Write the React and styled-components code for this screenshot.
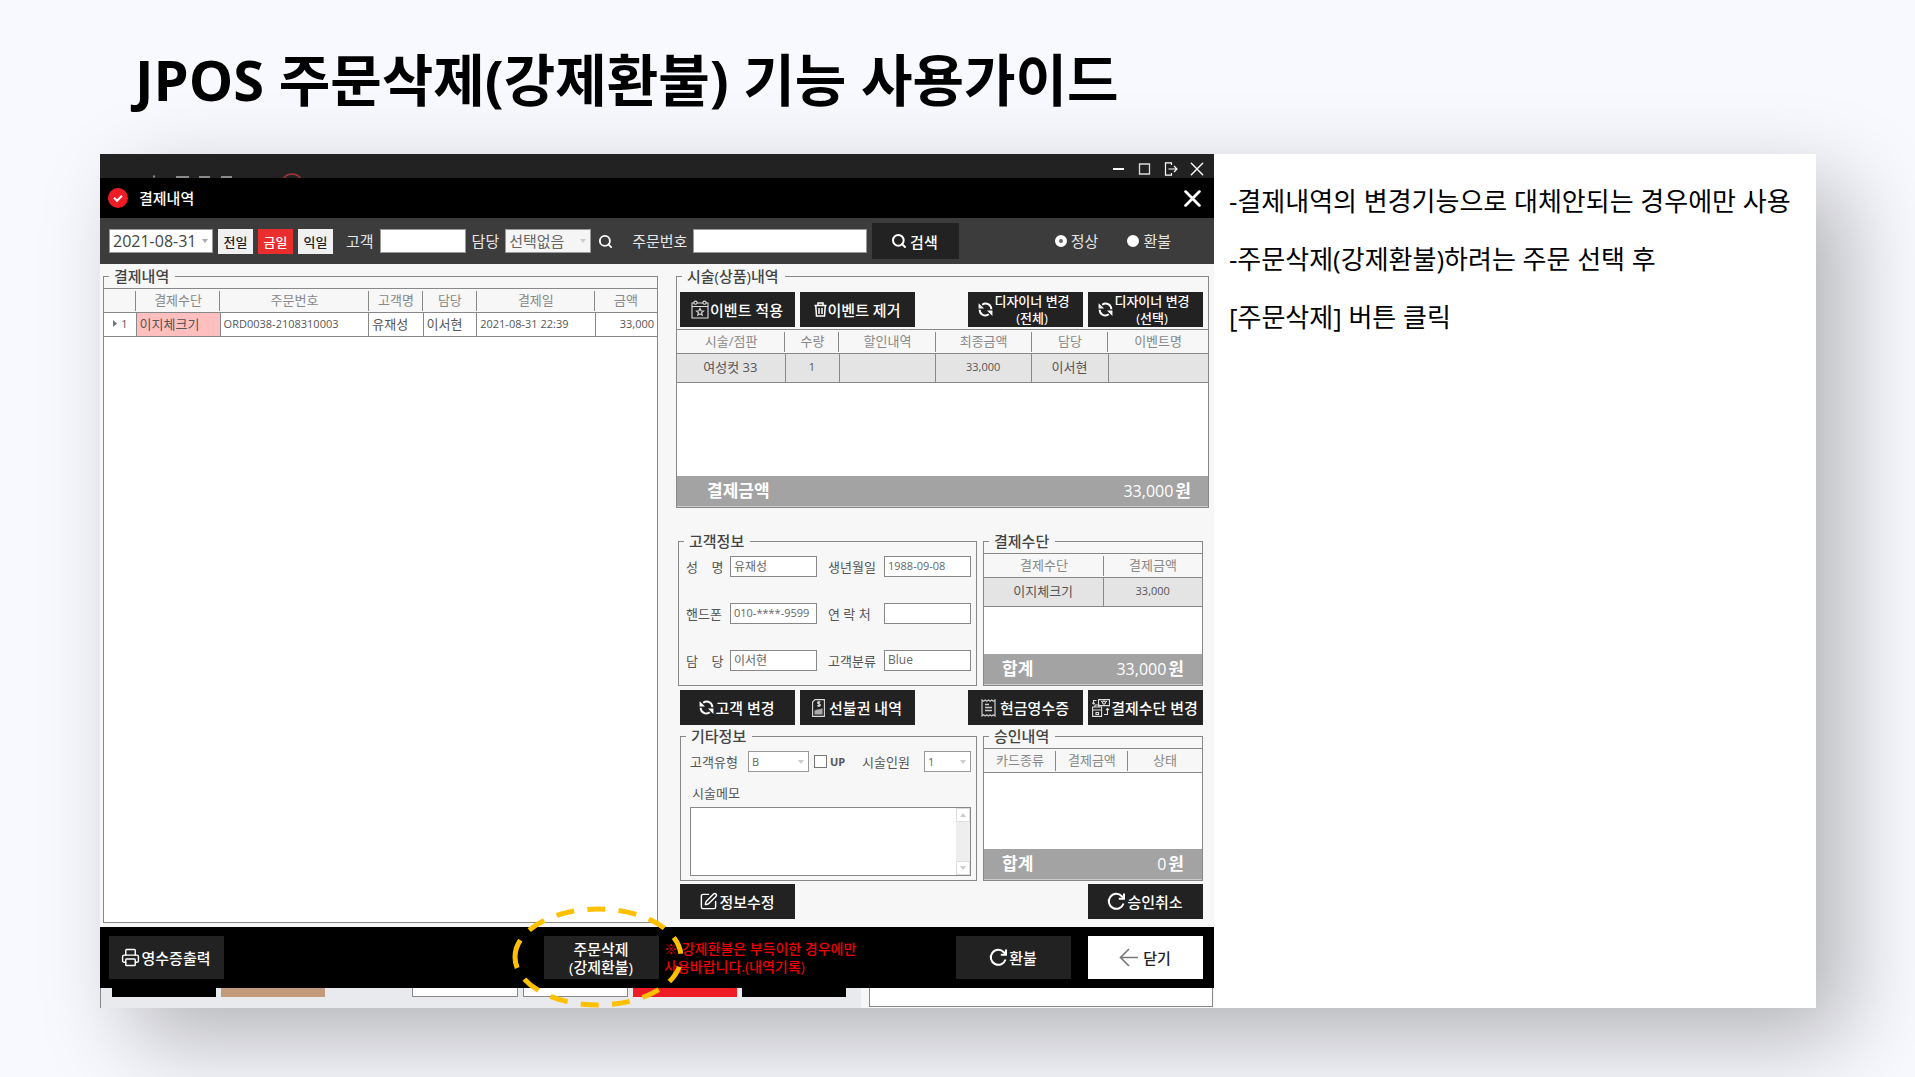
import React from "react";
import styled, { createGlobalStyle, css } from "styled-components";
import { Printer, Search, SquarePen } from "lucide-react";

const GlobalStyle = createGlobalStyle`
  * {
    box-sizing: border-box;
  }
  body {
    margin: 0;
    background: #f8f9fe;
    color: #000;
    font-family: "Open Sans", "Noto Sans CJK KR", sans-serif;
  }
  button, input, select, textarea {
    font-family: inherit;
    margin: 0;
  }
`;

const Page = styled.div`
  min-height: 100vh;
  padding: 37px 99px 69px 100px;
  overflow: hidden;
`;
const Title = styled.h1`
  margin: 0 0 33px;
  padding-left: 35px;
  font-size: 56px;
  font-weight: 700;
  line-height: 84px;
`;
const Card = styled.div`
  display: grid;
  grid-template-columns: 1114fr 602fr;
  background: #fff;
  box-shadow: 31px 31px 82px rgba(0, 0, 0, 0.28);
`;
const Notes = styled.div`
  padding: 18px 12px 18px 15px;
  font-size: 26px;
  line-height: 58px;
  p {
    margin: 0;
  }
`;

/* ---------- program window ---------- */
const Window = styled.div`
  display: flex;
  flex-direction: column;
  min-width: 0;
  background: #f7f7f7;
`;
const TopBar = styled.div`
  display: flex;
  justify-content: space-between;
  height: 24px;
  padding: 0 10px 0 52px;
  background: #222;
`;
const WindowIcons = styled.div`
  display: flex;
  align-items: center;
  gap: 12px;
  padding-top: 6px;
`;
const IconButton = styled.button`
  display: flex;
  padding: 0;
  border: none;
  background: none;
  color: #fff;
  cursor: pointer;
`;
const TitleBar = styled.div`
  display: flex;
  align-items: center;
  height: 40px;
  padding: 0 13px 0 8px;
  background: #000;
  color: #fff;
  h2 {
    flex: 1;
    margin: 0 0 0 11px;
    font-size: 15px;
    font-weight: 500;
    line-height: 20px;
  }
`;
const ToolBar = styled.div`
  display: flex;
  align-items: center;
  height: 46px;
  padding: 0 43px 0 9px;
  background: #3c3c3c;
  color: #e6e6e6;
  font-size: 15px;
  line-height: 20px;
  label {
    white-space: nowrap;
  }
`;
const Days = styled.div`
  display: flex;
  gap: 5px;
  margin: 0 13px 0 5px;
`;
const DayButton = styled.button`
  width: 35px;
  height: 25px;
  padding: 0;
  border: 1px solid ${(p) => (p.$on ? "#ea2d2d" : "#f0f0f0")};
  background: ${(p) => (p.$on ? "#ea2d2d" : "#f0f0f0")};
  color: ${(p) => (p.$on ? "#fff" : "#222")};
  font-size: 13px;
  font-weight: 500;
  cursor: pointer;
`;
const Labelled = styled.label`
  display: flex;
  align-items: center;
  gap: 6px;
  margin-right: ${(p) => p.$after || 0}px;
  margin-left: ${(p) => p.$before || 0}px;
`;
const ToolInput = styled.input`
  width: ${(p) => p.$w}px;
  height: 24px;
  padding: 0 4px;
  border: 1px solid #999;
  background: #fff;
`;
const SearchButton = styled.button`
  display: flex;
  align-items: center;
  justify-content: center;
  gap: 3px;
  width: 87px;
  height: 36px;
  margin-left: 5px;
  padding: 0 3px 0 0;
  border: none;
  background: #222;
  color: #fff;
  font-size: 15px;
  font-weight: 500;
  cursor: pointer;
`;
const Radios = styled.div`
  display: flex;
  gap: 29px;
  margin-left: auto;
  label {
    display: flex;
    align-items: center;
    gap: 4px;
  }
  input {
    appearance: none;
    width: 12px;
    height: 12px;
    border: 4px solid #fff;
    border-radius: 50%;
    background: #fff;
  }
  input:checked {
    background: #666;
  }
`;

/* box with a tiny arrow, used by the date field and the drop-downs */
const Combo = styled.span`
  display: flex;
  align-items: center;
  width: ${(p) => p.$w}px;
  height: ${(p) => p.$h || 21}px;
  padding-right: 4px;
  border: 1px solid #999;
  background: ${(p) => p.$bg || "#fff"};
  select,
  input {
    appearance: none;
    flex: 1;
    min-width: 0;
    height: 100%;
    padding: 0 0 0 3px;
    border: none;
    background: none;
    color: ${(p) => p.$color || "#666"};
    font-size: ${(p) => p.$size || 11}px;
  }
`;

const Body = styled.div`
  display: grid;
  grid-template-columns: 555fr 533fr;
  gap: 18px;
  padding: 4px 5px 4px 3px;
`;
const Group = styled.fieldset`
  display: flex;
  flex-direction: column;
  min-width: 0;
  margin: 0 0 0 ${(p) => p.$left || 0}px;
  padding: ${(p) => p.$pad || "4px 0 0"};
  border: 1px solid #888;
  legend {
    margin-left: 5px;
    padding: 0 6px 0 5px;
    color: #444;
    font-size: 15px;
    font-weight: 500;
    line-height: 16px;
  }
`;
const Sheet = styled.div`
  display: flex;
  flex: 1;
  flex-direction: column;
  min-height: ${(p) => p.$min || 0}px;
  background: #fff;
`;
const Table = styled.table`
  width: 100%;
  table-layout: fixed;
  border-collapse: collapse;
  border-top: 1px solid #888;
  color: #555;
  font-size: 13px;
  line-height: 18px;
  th {
    height: 24px;
    padding: 0 0 2px;
    border-bottom: 1px solid #888;
    background: #f7f7f7 linear-gradient(#888, #888) right center / 1px 20px
      no-repeat;
    color: #888;
    font-weight: 400;
  }
  th:last-child {
    background-image: none;
  }
  td {
    height: ${(p) => (p.$shaded ? 29 : 24)}px;
    padding: 0 4px 2px 3px;
    border-right: 1px solid #888;
    border-bottom: 1px solid #888;
    background: ${(p) => (p.$shaded ? "#e4e4e4" : "#fff")};
    text-align: ${(p) => (p.$shaded ? "center" : "left")};
    white-space: nowrap;
  }
  td:last-child {
    border-right: none;
  }
`;
const Cell = styled.td`
  font-size: ${(p) => (p.$num ? 11 : 13)}px;
  ${(p) =>
    p.$right &&
    css`
      && {
        text-align: right;
        padding-right: 3px;
      }
    `}
  ${(p) =>
    p.$pink &&
    css`
      && {
        background: #ffbfbf;
      }
    `}
`;
const RowMark = styled.div`
  display: flex;
  align-items: center;
  justify-content: space-between;
  padding: 0 4px 0 6px;
`;
const Total = styled.div`
  display: flex;
  align-items: center;
  justify-content: space-between;
  height: 31px;
  margin-top: auto;
  padding: ${(p) => (p.$wide ? "0 17px 0 30px" : "0 18px")};
  border-bottom: 1px solid #ccc;
  background: #a3a3a3;
  color: #fff;
  font-size: 17px;
  line-height: 24px;
  span {
    margin-right: 2px;
    font-size: 16px;
  }
`;
const Right = styled.div`
  display: flex;
  flex-direction: column;
  min-width: 0;
  padding-bottom: 4px;
`;
const Pair = styled.div`
  display: grid;
  grid-template-columns: 299fr 220fr;
  gap: 6px;
  min-height: 153px;
  margin: ${(p) => p.$top}px 6px 0 2px;
`;
const Actions = styled.div`
  display: flex;
  gap: 5px;
  padding: ${(p) => p.$pad || "0 6px 0 4px"};
  margin-top: ${(p) => p.$top || 0}px;
  .push {
    margin-left: auto;
  }
`;
const Button = styled.button`
  display: flex;
  align-items: center;
  justify-content: center;
  gap: ${(p) => (p.$loose ? 4 : 1)}px;
  width: 115px;
  height: ${(p) => (p.$tall ? 43 : 35)}px;
  padding: 0 ${(p) => (p.$small ? 3 : 1)}px 0 0;
  border: none;
  background: ${(p) => (p.$white ? "#fff" : "#222")};
  color: ${(p) => (p.$white ? "#222" : "#fff")};
  font-size: ${(p) => (p.$small ? 13 : 15)}px;
  font-weight: 500;
  line-height: ${(p) => (p.$small ? 17 : 18)}px;
  white-space: nowrap;
  cursor: pointer;
  svg {
    flex: none;
  }
`;

const Customer = styled.div`
  display: grid;
  grid-template-columns: 131fr 143fr;
  row-gap: 26px;
  column-gap: 11px;
  padding: 3px 5px 0 7px;
  label {
    display: flex;
    align-items: center;
    justify-content: space-between;
    color: #555;
    font-size: 13px;
    line-height: 18px;
    white-space: pre;
  }
  input {
    width: 87px;
    height: 21px;
    padding: 0 0 2px 3px;
    border: 1px solid #888;
    background: #fff;
    color: #666;
    font-size: 12px;
  }
  input.num {
    font-size: 11px;
  }
`;
const Extra = styled.div`
  display: flex;
  flex-direction: column;
  padding: 3px 5px 4px 9px;
`;
const ExtraRow = styled.div`
  display: grid;
  grid-template-columns: 58px 66px 48px 1fr 47px;
  align-items: center;
  color: #555;
  font-size: 13px;
  line-height: 18px;
  label {
    display: flex;
    align-items: center;
    gap: 3px;
    white-space: nowrap;
  }
  b {
    font-size: 11px;
  }
`;
const Check = styled.input`
  appearance: none;
  width: 13px;
  height: 13px;
  border: 1px solid #777;
  background: #fff;
`;
const MemoLabel = styled.label`
  padding: 12px 0 5px 2px;
  color: #555;
  font-size: 13px;
  line-height: 18px;
`;
const MemoBox = styled.div`
  display: flex;
  height: 69px;
  border: 1px solid #888;
  background: #fff;
  textarea {
    flex: 1;
    min-width: 0;
    padding: 3px;
    border: none;
    background: none;
    resize: none;
  }
`;
const Scroll = styled.div`
  display: flex;
  flex-direction: column;
  justify-content: space-between;
  width: 14px;
  background: #eee;
  span {
    display: flex;
    align-items: center;
    justify-content: center;
    height: 14px;
    border: 1px solid #ddd;
    background: #fff;
  }
`;

const Footer = styled.div`
  display: flex;
  align-items: center;
  height: 61px;
  padding: 0 11px 0 9px;
  background: #000;
`;
const DeleteSpot = styled.div`
  position: relative;
  margin-left: auto;
`;
/* dashed marker round the delete button */
const Ring = styled.svg`
  position: absolute;
  left: -34px;
  top: -32px;
  pointer-events: none;
`;
const Warning = styled.p`
  width: 297px;
  margin: 0;
  padding-left: 5px;
  color: #f00000;
  font-size: 14px;
  font-weight: 500;
  line-height: 18px;
  white-space: nowrap;
`;
const FooterEnd = styled.div`
  display: flex;
  gap: 17px;
`;
const Behind = styled.div`
  display: grid;
  grid-template-columns: 760fr 353fr;
  height: 20px;
  border-left: 1px solid #888;
  background: #e9eaee;
`;
const Stubs = styled.div`
  display: flex;
  gap: 5px;
  padding: 0 15px 0 11px;
`;
const Stub = styled.div`
  flex: ${(p) => p.$grow || 105};
  height: 9px;
  background: ${(p) => p.$bg};
  border: ${(p) => (p.$line ? "1px solid #888" : "none")};
  border-top: none;
`;
const BehindPanel = styled.div`
  padding: 0 1px 1px 8px;
  background: #f7f7f7;
  div {
    height: 19px;
    border: 1px solid #888;
    border-top: none;
    background: #fff;
  }
`;

/* ---------- icons ---------- */
const Caret = ({ up, color = "#aaa" }) => (
  <svg width="6" height="4" viewBox="0 0 6 4">
    <path d={up ? "M0 4h6L3 0z" : "M0 0h6L3 4z"} fill={color} />
  </svg>
);
const LogoEdge = () => (
  <svg width="150" height="24" viewBox="0 0 150 24" fill="none">
    <path d="M1 22.5h2M24 23h13M47 23h11M69 23h11" stroke="#8a8a8a" strokeWidth="2" />
    <circle cx="140" cy="31" r="11" stroke="#a8323a" strokeWidth="1.5" />
  </svg>
);
const CheckBadge = () => (
  <svg width="20" height="20" viewBox="0 0 20 20" fill="none">
    <circle cx="10" cy="10" r="10" fill="#ee1c25" />
    <path d="M6 9.8l3 3 5-5" stroke="#fff" strokeWidth="2" />
  </svg>
);
const CloseIcon = ({ size, w }) => (
  <svg width={size} height={size} viewBox="0 0 16 16" fill="none">
    <path d="M1.5 1.5l13 13M14.5 1.5l-13 13" stroke="#fff" strokeWidth={w} strokeLinecap="round" />
  </svg>
);
const MinIcon = () => (
  <svg width="14" height="14" viewBox="0 0 14 14">
    <path d="M1 6h11v2H1z" fill="#fff" />
  </svg>
);
const MaxIcon = () => (
  <svg width="14" height="14" viewBox="0 0 14 14" fill="none">
    <path d="M1.5 2h10v10h-10z" stroke="#ddd" strokeWidth="1.3" />
  </svg>
);
const ExitIcon = () => (
  <svg width="14" height="14" viewBox="0 0 14 14" fill="none" stroke="#fff" strokeWidth="1.2">
    <path d="M7.5 3V.8h-6v12.4h6V11M4.5 7H13M10 4l3 3-3 3" />
  </svg>
);
const SyncIcon = () => (
  <svg width="15" height="15" viewBox="0 0 16 16" fill="none" stroke="#fff" strokeWidth="2.1">
    <path d="M4.5 2.9A6 6 0 0 1 14.2 7.8M11.5 13.1A6 6 0 0 1 1.8 8.2" />
    <path d="M.6 1.2v5.800h5.800zM15.4 14.8V9H9.6z" fill="#fff" stroke="none" />
  </svg>
);
const RedoIcon = () => (
  <svg width="19" height="19" viewBox="0 0 19 19" fill="none" stroke="#fff" strokeWidth="2">
    <path d="M16.5 11.5A7.5 7.5 0 1 1 14.8 4.2l1.700 1.800" />
    <path d="M17 1.5v5.2h-5.2" />
  </svg>
);
const BackIcon = () => (
  <svg width="20" height="19" viewBox="0 0 20 19" fill="none" stroke="#777" strokeWidth="1.6">
    <path d="M19 9.5H1.5M10 1L1.5 9.5 10 18" />
  </svg>
);
const CalendarStarIcon = () => (
  <svg width="18" height="19" viewBox="0 0 18 19" fill="none" stroke="#ddd" strokeWidth="1.1">
    <path d="M3 3H1v15h16V3h-2M6 3h6M1 6.5h16" />
    <circle cx="4.500" cy="2.700" r="1.600" />
    <circle cx="13.500" cy="2.700" r="1.600" />
    <path d="M9 8.500l1 2.300 2.500.3-1.900 1.600.6 2.500L9 13.900l-2.200 1.300.6-2.500-1.900-1.600 2.500-.3z" />
  </svg>
);
const TrashIcon = () => (
  <svg width="13" height="15" viewBox="0 0 13 15" fill="none" stroke="#fff" strokeWidth="1.5">
    <path d="M.5 3.5h12M4 3V1h5v2M1.8 4l.7 10h8l.7-10M5 6v6M8 6v6" />
  </svg>
);
const PrepaidIcon = () => (
  <svg width="13" height="18" viewBox="0 0 13 18" fill="none" stroke="#ddd" strokeWidth="1.1">
    <path d="M3 .6h9.4v16.8H.6V3z" />
    <path d="M8.3 3.3c-.6-.8-2.8-.7-2.8.5s2.9.8 2.9 2.1-2.4 1.5-3.1.5M6.9 2v6" />
    <path d="M3 15v-3l2-1h2l3-1v5z" fill="#aaa" stroke="#aaa" />
  </svg>
);
const ReceiptIcon = () => (
  <svg width="15" height="18" viewBox="0 0 15 18" fill="none" stroke="#ccc" strokeWidth="1.2">
    <path d="M1 1l1.6 1.2L4.3 1l1.6 1.2L7.5 1l1.6 1.2L10.7 1l1.6 1.2L14 1v16l-1.7-1.2-1.6 1.2-1.6-1.2L7.5 17l-1.6-1.2L4.3 17l-1.7-1.2L1 17z" />
    <path d="M4 5.5h4M4 8.5h7M4 11.5h7" strokeWidth="1.5" />
  </svg>
);
const PayChangeIcon = () => (
  <svg width="18" height="18" viewBox="0 0 18 18" fill="none" stroke="#ddd" strokeWidth="1.1">
    <path d="M6.5.6h11v6h-11zM9 2.5h1M14 2.5h1" />
    <circle cx="12" cy="3.6" r="1.5" />
    <path d="M.6 8h9v9.4h-9zM.6 11h9M3 8V6h4v2M4 13.5h2.5v2H4z" />
    <path d="M4.5 1.5h-3V5M.3 3.8L1.500 5l1.300-1.200M12 15.500h3.500v-6M14 11l1.500-1.500L17 11" />
  </svg>
);

function OrderTable() {
  return (
    <Table>
      <colgroup>
        <col style={{ width: "5.8%" }} />
        <col style={{ width: "15.2%" }} />
        <col style={{ width: "26.9%" }} />
        <col style={{ width: "9.8%" }} />
        <col style={{ width: "9.7%" }} />
        <col style={{ width: "21.4%" }} />
        <col />
      </colgroup>
      <thead>
        <tr>
          <th aria-label="번호"></th>
          <th>결제수단</th>
          <th>주문번호</th>
          <th>고객명</th>
          <th>담당</th>
          <th>결제일</th>
          <th>금액</th>
        </tr>
      </thead>
      <tbody>
        <tr>
          <Cell $num>
            <RowMark>
              <svg width="4" height="7" viewBox="0 0 4 7"><path d="M0 0l4 3.5L0 7z" fill="#777" /></svg>
              1
            </RowMark>
          </Cell>
          <Cell $pink>이지체크기</Cell>
          <Cell $num>ORD0038-2108310003</Cell>
          <Cell>유재성</Cell>
          <Cell>이서현</Cell>
          <Cell $num>2021-08-31 22:39</Cell>
          <Cell $num $right>33,000</Cell>
        </tr>
      </tbody>
    </Table>
  );
}

function ItemTable() {
  return (
    <Table $shaded>
      <colgroup>
        <col style={{ width: "20.4%" }} />
        <col style={{ width: "10.2%" }} />
        <col style={{ width: "18.1%" }} />
        <col style={{ width: "18.1%" }} />
        <col style={{ width: "14.4%" }} />
        <col />
      </colgroup>
      <thead>
        <tr>
          <th>시술/점판</th>
          <th>수량</th>
          <th>할인내역</th>
          <th>최종금액</th>
          <th>담당</th>
          <th>이벤트명</th>
        </tr>
      </thead>
      <tbody>
        <tr>
          <Cell>여성컷 33</Cell>
          <Cell $num>1</Cell>
          <Cell></Cell>
          <Cell $num>33,000</Cell>
          <Cell>이서현</Cell>
          <Cell></Cell>
        </tr>
      </tbody>
    </Table>
  );
}

function Header() {
  return (
    <>
      <TopBar>
        <LogoEdge />
        <WindowIcons>
          <IconButton aria-label="최소화"><MinIcon /></IconButton>
          <IconButton aria-label="최대화"><MaxIcon /></IconButton>
          <IconButton aria-label="나가기"><ExitIcon /></IconButton>
          <IconButton aria-label="종료"><CloseIcon size={14} w={1.6} /></IconButton>
        </WindowIcons>
      </TopBar>
      <TitleBar>
        <CheckBadge />
        <h2>결제내역</h2>
        <IconButton aria-label="창 닫기"><CloseIcon size={17} w={2.6} /></IconButton>
      </TitleBar>
      <ToolBar>
        <Combo $w={104} $h={24} $size={16} $color="#444">
          <input aria-label="날짜" defaultValue="2021-08-31" />
          <Caret />
        </Combo>
        <Days>
          <DayButton>전일</DayButton>
          <DayButton $on>금일</DayButton>
          <DayButton>익일</DayButton>
        </Days>
        <Labelled $after={6}>
          고객
          <ToolInput $w={86} />
        </Labelled>
        <Labelled $after={7}>
          담당
          <Combo $w={86} $h={24} $size={15} $bg="#f5f5f5">
            <select>
              <option>선택없음</option>
            </select>
            <Caret color="#ccc" />
          </Combo>
        </Labelled>
        <IconButton aria-label="담당 검색"><Search size={15} strokeWidth={3} /></IconButton>
        <Labelled $before={19}>
          주문번호
          <ToolInput $w={174} />
        </Labelled>
        <SearchButton>
          <Search size={16} strokeWidth={3} />
          검색
        </SearchButton>
        <Radios>
          <label>
            <input type="radio" name="state" defaultChecked />
            정상
          </label>
          <label>
            <input type="radio" name="state" />
            환불
          </label>
        </Radios>
      </ToolBar>
    </>
  );
}

function CustomerInfo() {
  return (
    <Group>
      <legend>고객정보</legend>
      <Customer>
        <label>성{"    "}명<input defaultValue="유재성" /></label>
        <label>생년월일<input className="num" defaultValue="1988-09-08" /></label>
        <label>핸드폰<input className="num" defaultValue="010-****-9599" /></label>
        <label>연 락 처<input /></label>
        <label>담{"    "}당<input defaultValue="이서현" /></label>
        <label>고객분류<input defaultValue="Blue" /></label>
      </Customer>
    </Group>
  );
}

function ExtraInfo() {
  return (
    <Group $left={2}>
      <legend>기타정보</legend>
      <Extra>
        <ExtraRow>
          <label htmlFor="kind">고객유형</label>
          <Combo $w={61}>
            <select id="kind">
              <option>B</option>
            </select>
            <Caret color="#ccc" />
          </Combo>
          <label>
            <Check type="checkbox" />
            <b>UP</b>
          </label>
          <label htmlFor="people">시술인원</label>
          <Combo $w={47}>
            <select id="people">
              <option>1</option>
            </select>
            <Caret color="#ccc" />
          </Combo>
        </ExtraRow>
        <MemoLabel htmlFor="memo">시술메모</MemoLabel>
        <MemoBox>
          <textarea id="memo" />
          <Scroll>
            <span><Caret up color="#ccc" /></span>
            <span><Caret color="#ccc" /></span>
          </Scroll>
        </MemoBox>
      </Extra>
    </Group>
  );
}

function Details() {
  return (
    <Right>
      <Group $pad="8px 0 0">
        <legend>시술(상품)내역</legend>
        <Actions $pad="0 5px 2px 3px">
          <Button><CalendarStarIcon />이벤트 적용</Button>
          <Button><TrashIcon />이벤트 제거</Button>
          <Button $small className="push"><SyncIcon /><span>디자이너 변경<br />(전체)</span></Button>
          <Button $small><SyncIcon /><span>디자이너 변경<br />(선택)</span></Button>
        </Actions>
        <Sheet $min={178}>
          <ItemTable />
          <Total $wide>
            <b>결제금액</b>
            <div><span>33,000</span><b>원</b></div>
          </Total>
        </Sheet>
      </Group>

      <Pair $top={25}>
        <CustomerInfo />
        <Group>
          <legend>결제수단</legend>
          <Sheet>
            <Table $shaded>
              <colgroup>
                <col style={{ width: "55%" }} />
                <col />
              </colgroup>
              <thead>
                <tr>
                  <th>결제수단</th>
                  <th>결제금액</th>
                </tr>
              </thead>
              <tbody>
                <tr>
                  <Cell>이지체크기</Cell>
                  <Cell $num>33,000</Cell>
                </tr>
              </tbody>
            </Table>
            <Total>
              <b>합계</b>
              <div><span>33,000</span><b>원</b></div>
            </Total>
          </Sheet>
        </Group>
      </Pair>
      <Actions $top={4}>
        <Button><SyncIcon />고객 변경</Button>
        <Button $loose><PrepaidIcon />선불권 내역</Button>
        <Button $loose className="push"><ReceiptIcon />현금영수증</Button>
        <Button><PayChangeIcon />결제수단 변경</Button>
      </Actions>

      <Pair $top={3}>
        <ExtraInfo />
        <Group>
          <legend>승인내역</legend>
          <Sheet>
            <Table>
              <colgroup>
                <col style={{ width: "33%" }} />
                <col style={{ width: "33%" }} />
                <col />
              </colgroup>
              <thead>
                <tr>
                  <th>카드종류</th>
                  <th>결제금액</th>
                  <th>상태</th>
                </tr>
              </thead>
            </Table>
            <Total>
              <b>합계</b>
              <div><span>0</span><b>원</b></div>
            </Total>
          </Sheet>
        </Group>
      </Pair>
      <Actions $top={3}>
        <Button><SquarePen size={19} strokeWidth={1.8} />정보수정</Button>
        <Button className="push"><RedoIcon />승인취소</Button>
      </Actions>
    </Right>
  );
}

function BottomBar() {
  return (
    <>
      <Footer>
        <Button $tall><Printer size={19} strokeWidth={1.8} />영수증출력</Button>
        <DeleteSpot>
          <Button $tall>주문삭제<br />(강제환불)</Button>
          <Ring width="176" height="106" viewBox="0 0 176 106" fill="none">
            <path
              d="M5 53A83 48 0 0 1 171 53A83 48 0 0 1 5 53"
              stroke="#ffc000"
              strokeWidth="5"
              strokeDasharray="18 13.3"
            />
          </Ring>
        </DeleteSpot>
        <Warning>
          ※ 강제환불은 부득이한 경우에만
          <br />
          사용바랍니다.(내역기록)
        </Warning>
        <FooterEnd>
          <Button $tall><RedoIcon />환불</Button>
          <Button $tall $white $loose><BackIcon />닫기</Button>
        </FooterEnd>
      </Footer>
      <Behind>
        <Stubs>
          <Stub $bg="#000" />
          <Stub $bg="#c39b7b" />
          <Stub $grow={78} $bg="none" />
          <Stub $bg="#fff" $line />
          <Stub $bg="#fff" $line />
          <Stub $bg="#ee1c25" />
          <Stub $bg="#000" />
        </Stubs>
        <BehindPanel><div /></BehindPanel>
      </Behind>
    </>
  );
}

function App() {
  return (
    <Page>
      <GlobalStyle />
      <Title>JPOS 주문삭제(강제환불) 기능 사용가이드</Title>
      <Card>
        <Window>
          <Header />
          <Body>
            <Group>
              <legend>결제내역</legend>
              <Sheet>
                <OrderTable />
              </Sheet>
            </Group>
            <Details />
          </Body>
          <BottomBar />
        </Window>
        <Notes>
          <p>-결제내역의 변경기능으로 대체안되는 경우에만 사용</p>
          <p>-주문삭제(강제환불)하려는 주문 선택 후</p>
          <p>[주문삭제] 버튼 클릭</p>
        </Notes>
      </Card>
    </Page>
  );
}
export default App;
